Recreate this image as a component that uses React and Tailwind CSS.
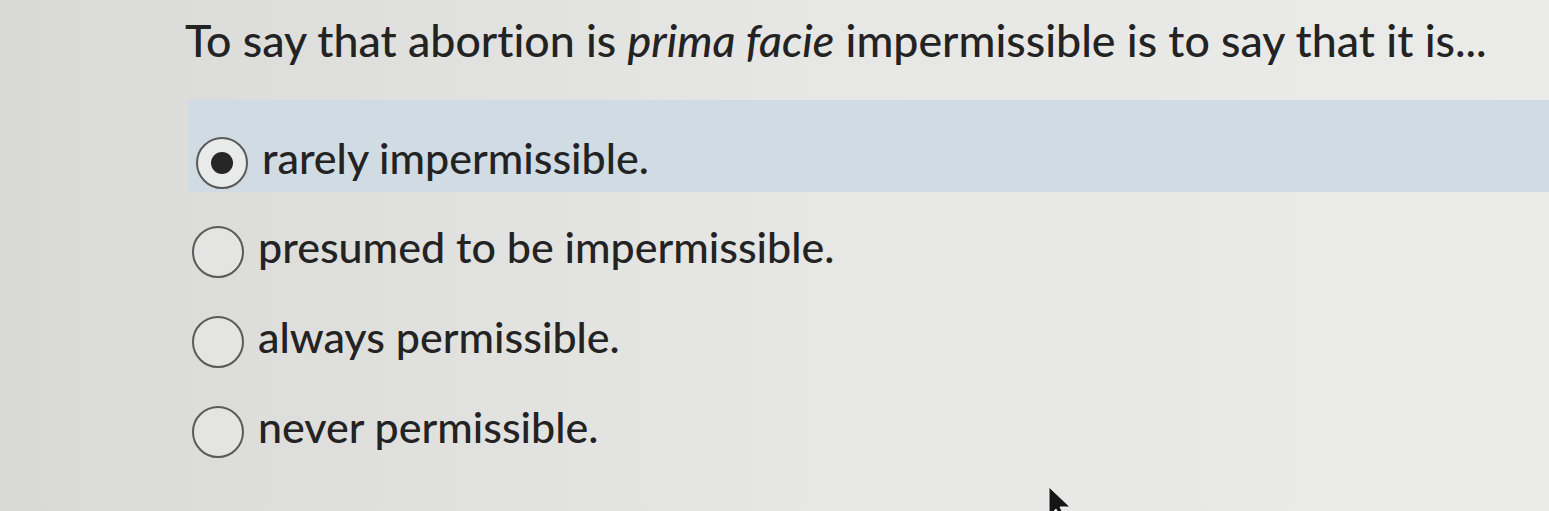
export default function App() {
  const options = [
    { id: 1, label: "presumed to be impermissible." },
    { id: 2, label: "always permissible." },
    { id: 3, label: "never permissible." },
  ];

  return (
    <div
      className="relative h-[511px] w-full overflow-hidden bg-gradient-to-r from-[#d9d9d8] via-[#e6e6e4] to-[#ebebe9] text-[#232323] [font-variant-ligatures:none]"
      style={{ fontFamily: "Lato, 'Noto Sans', sans-serif" }}
    >
      {/* Question */}
      <h1 className="pl-[185px] pt-[14px] text-[44.7px] leading-[52px] font-medium">
        To say that abortion is <em className="italic">prima facie</em> impermissible is to say that it is...
      </h1>

      {/* Answers */}
      <div className="mt-[34px] pl-[188px]">
        <label className="flex h-[92px] items-center gap-[14px] bg-[#d0dbe3] pl-[8px] pt-[34px]">
          <span className="flex h-[52px] w-[52px] shrink-0 items-center justify-center rounded-full border-2 border-[#5a5a5a] bg-[#e9eaea]">
            <span className="h-[22px] w-[22px] rounded-full bg-[#262626]" />
          </span>
          <span className="mb-[12px] text-[43px] leading-none font-medium">rarely impermissible.</span>
        </label>

        <div className="mt-[15px]">
          {options.map((o) => (
            <label key={o.id} className="flex h-[90px] items-center gap-[14px] pl-[4px]">
              <span className="h-[52px] w-[52px] shrink-0 rounded-full border-2 border-[#5a5a5a] bg-[#e4e4e2]" />
              <span className="mb-[12px] text-[43px] leading-none font-medium">{o.label}</span>
            </label>
          ))}
        </div>
      </div>

      {/* mouse pointer */}
      <svg className="absolute left-[1048px] top-[486px]" width="26" height="34" viewBox="0 0 26 34">
        <path d="M1 1 L1 30 L8 23 L13 33 L17 31 L12 21 L22 21 Z" fill="#151515" stroke="#f0f0f0" strokeWidth="1" />
      </svg>
    </div>
  );
}
